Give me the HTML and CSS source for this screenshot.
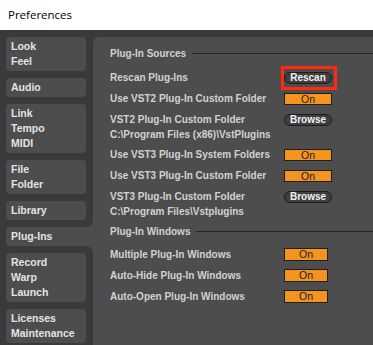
FILE: index.html
```html
<!DOCTYPE html>
<html lang="en">
<head>
    <meta charset="UTF-8">
    <title>Preferences</title>
    <link rel="stylesheet" href="styles.css">
</head>
<body>

<div class="titlebar">Preferences</div>

<div class="app">
    <nav class="tabs">
        <div class="tab">Look<br>Feel</div>
        <div class="tab">Audio</div>
        <div class="tab">Link<br>Tempo<br>MIDI</div>
        <div class="tab">File<br>Folder</div>
        <div class="tab">Library</div>
        <div class="tab active">Plug-Ins</div>
        <div class="tab">Record<br>Warp<br>Launch</div>
        <div class="tab">Licenses<br>Maintenance</div>
    </nav>

    <main class="panel">
        <div class="section-head">Plug-In Sources</div>

        <div class="row">
            <span class="label">Rescan Plug-Ins</span>
            <span class="highlight"><button class="pill">Rescan</button></span>
        </div>
        <div class="row">
            <span class="label">Use VST2 Plug-In Custom Folder</span>
            <button class="toggle">On</button>
        </div>
        <div class="row">
            <span class="label">VST2 Plug-In Custom Folder</span>
            <button class="pill">Browse</button>
        </div>
        <div class="path">C:\Program Files (x86)\VstPlugins</div>
        <div class="row">
            <span class="label">Use VST3 Plug-In System Folders</span>
            <button class="toggle">On</button>
        </div>
        <div class="row">
            <span class="label">Use VST3 Plug-In Custom Folder</span>
            <button class="toggle">On</button>
        </div>
        <div class="row">
            <span class="label">VST3 Plug-In Custom Folder</span>
            <button class="pill">Browse</button>
        </div>
        <div class="path">C:\Program Files\Vstplugins</div>

        <div class="section-head second">Plug-In Windows</div>

        <div class="row">
            <span class="label">Multiple Plug-In Windows</span>
            <button class="toggle small">On</button>
        </div>
        <div class="row">
            <span class="label">Auto-Hide Plug-In Windows</span>
            <button class="toggle small">On</button>
        </div>
        <div class="row">
            <span class="label">Auto-Open Plug-In Windows</span>
            <button class="toggle small">On</button>
        </div>
    </main>
</div>

</body>
</html>
```

FILE: styles.css
```css
body, html {
    margin: 0;
    padding: 0;
    height: 100%;
    overflow: hidden;
}
body {
    background: #3a3a3a;
    font-family: "Liberation Sans", Arial, sans-serif;
}
.titlebar {
    height: 30px;
    line-height: 30px;
    padding-left: 8px;
    background: #fff;
    color: #000;
    font-family: "Open Sans", "Noto Sans", sans-serif;
    font-size: 11.5px;
}
.app {
    display: flex;
    height: 315px;
    padding-top: 7px;
    box-sizing: border-box;
    background: #3a3a3a;
}

/* 左侧标签栏 */
.tabs {
    display: flex;
    flex-direction: column;
    gap: 7px;
    width: 80px;
    flex: none;
    margin: 0 7px 0 6px;
}
.tab {
    padding: 2px 5px;
    line-height: 15px;
    background: #4d4d4d;
    border-radius: 4px;
    color: #e4e4e4;
    font-size: 10.5px;
    font-weight: bold;
}
.tab.active {
    position: relative;
    margin-right: -7px;
    border-radius: 4px 0 0 4px;
}
/* 选中标签和面板之间的圆角过渡 */
.tab.active::before,
.tab.active::after {
    content: "";
    position: absolute;
    right: 0;
    width: 6px;
    height: 6px;
}
.tab.active::before {
    top: -6px;
    background: radial-gradient(circle at 0 0, transparent 5.5px, #4d4d4d 6px);
}
.tab.active::after {
    bottom: -6px;
    background: radial-gradient(circle at 0 100%, transparent 5.5px, #4d4d4d 6px);
}

/* 右侧设置面板 */
.panel {
    flex: 1;
    background: #4d4d4d;
    border-radius: 6px 0 0 0;
    padding: 6px 0 0 17px;
    color: #d2d2d2;
    font-size: 10px;
    font-weight: bold;
}
.section-head {
    display: flex;
    align-items: center;
    height: 21px;
    margin-bottom: 3px;
}
.section-head::after {
    content: "";
    flex: 1;
    height: 1px;
    margin-left: 6px;
    background: #262626;
}
.section-head.second {
    margin-top: 1px;
    margin-bottom: 2px;
}
.row {
    display: flex;
    align-items: center;
    height: 21px;
}
.label {
    width: 174px;
    flex: none;
}
.path {
    line-height: 14px;
    margin: -2px 0 2px 0;
}
button {
    font-family: "Liberation Sans", Arial, sans-serif;
    font-size: 10px;
    font-weight: bold;
    padding: 0;
    box-sizing: border-box;
    cursor: pointer;
}
.pill {
    width: 48px;
    height: 12px;
    line-height: 10px;
    border: 1px solid #1c1c1c;
    border-radius: 6px;
    background: #3f3f3f;
    color: #f2f2f2;
}
.toggle {
    width: 48px;
    height: 12px;
    line-height: 10px;
    border: 1px solid #1f1f1f;
    background: #f3941f;
    color: #1a1a1a;
    font-size: 10.5px;
    font-weight: normal;
}
.toggle.small {
    width: 44px;
    height: 13px;
    line-height: 11px;
}
/* 红色标注框 */
.highlight {
    display: inline-flex;
    margin-left: -3px;
    padding: 3px 2px 3px 0;
    border: 3px solid #ff2b0f;
}
```
